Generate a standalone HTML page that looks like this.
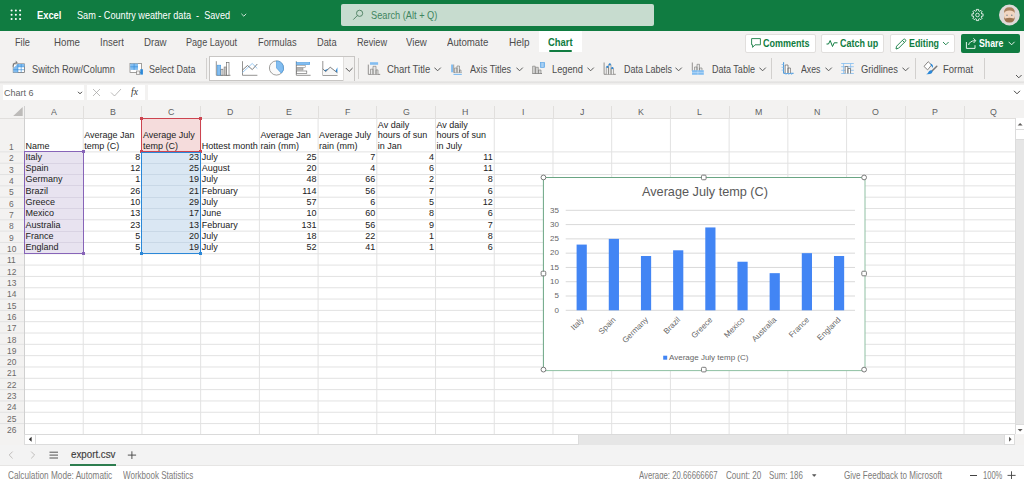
<!DOCTYPE html><html><head><meta charset="utf-8"><style>
*{box-sizing:border-box;margin:0;padding:0}
html,body{width:1024px;height:479px;overflow:hidden;background:#fff}
body{position:relative;font-family:"Liberation Sans",sans-serif;color:#201f1e}
.a{position:absolute;white-space:nowrap}
.hdr{left:0;top:0;width:1024px;height:31px;background:#107c41}
.rib{left:0;top:31px;width:1024px;height:53px;background:linear-gradient(#f3f2f1 0,#f3f2f1 50px,#dedddc 51px,#e9e8e7 52px,#f3f2f1 53px)}
.fbar{left:0;top:84px;width:1024px;height:34px;background:#f3f2f1}
.tab{font-size:9.6px;color:#323130;top:37px}
.tb{font-size:9.6px;color:#323130;top:63.5px}
.btn{height:19px;top:33.5px;background:#fff;border:1px solid #e1dfdd;border-radius:2px;color:#107c41;font-weight:bold;font-size:9.4px;line-height:17px}
.ch{font-size:9.8px;color:#605e5c;top:105.6px;text-align:center}
.rn{font-size:9.8px;color:#605e5c;text-align:center}
.cell{font-size:9px;color:#222;line-height:10.5px}
.num{text-align:right}
</style></head><body><div class="a hdr"></div>
<svg class="a" style="left:0;top:0" width="30" height="30" viewBox="0 0 30 30"><circle cx="11.60" cy="10.50" r="1.05" fill="#fff"/><circle cx="15.85" cy="10.50" r="1.05" fill="#fff"/><circle cx="20.10" cy="10.50" r="1.05" fill="#fff"/><circle cx="11.60" cy="14.75" r="1.05" fill="#fff"/><circle cx="15.85" cy="14.75" r="1.05" fill="#fff"/><circle cx="20.10" cy="14.75" r="1.05" fill="#fff"/><circle cx="11.60" cy="19.00" r="1.05" fill="#fff"/><circle cx="15.85" cy="19.00" r="1.05" fill="#fff"/><circle cx="20.10" cy="19.00" r="1.05" fill="#fff"/></svg>
<div class="a" style="left:37.43px;top:9.20px;font-size:10.75px;line-height:normal;color:#fff;font-weight:bold;transform:scaleX(0.866);transform-origin:0 0;">Excel</div>
<div class="a" style="left:76.54px;top:9.16px;font-size:10.75px;line-height:normal;color:#fff;transform:scaleX(0.848);transform-origin:0 0;">Sam - Country weather data&nbsp; -&nbsp; Saved</div>
<svg class="a" style="left:240px;top:12px" width="8" height="6" viewBox="0 0 8 6"><path d="M1.4 1.8 L3.8 4.2 L6.2 1.8" fill="none" stroke="#fff" stroke-width="0.8"/></svg>
<div class="a" style="left:341px;top:4.2px;width:313px;height:21.4px;background:#c7dccf;border-radius:2px"></div>
<svg class="a" style="left:352px;top:9px" width="12" height="12" viewBox="0 0 12 12"><circle cx="7.6" cy="4.3" r="3.1" fill="none" stroke="#4b7d5f" stroke-width="0.9"/><path d="M5.4 6.5 L1.3 10.6" stroke="#4b7d5f" stroke-width="0.9"/></svg>
<div class="a" style="left:370.94px;top:8.80px;font-size:10.75px;line-height:normal;color:#3f8560;transform:scaleX(0.857);transform-origin:0 0;">Search (Alt + Q)</div>
<svg class="a" style="left:970px;top:8px" width="15" height="14" viewBox="0 0 15 14"><path d="M6.31 1.42 L8.69 1.42 L8.50 2.82 L9.75 3.33 L10.60 2.22 L12.28 3.90 L11.17 4.75 L11.68 6.00 L13.08 5.81 L13.08 8.19 L11.68 8.00 L11.17 9.25 L12.28 10.10 L10.60 11.78 L9.75 10.67 L8.50 11.18 L8.69 12.58 L6.31 12.58 L6.50 11.18 L5.25 10.67 L4.40 11.78 L2.72 10.10 L3.83 9.25 L3.32 8.00 L1.92 8.19 L1.92 5.81 L3.32 6.00 L3.83 4.75 L2.72 3.90 L4.40 2.22 L5.25 3.33 L6.50 2.82 Z" fill="none" stroke="#fff" stroke-width="0.8" stroke-linejoin="round"/><circle cx="7.5" cy="7" r="1.8" fill="none" stroke="#fff" stroke-width="0.8"/></svg>
<svg class="a" style="left:998px;top:4px" width="23" height="23" viewBox="0 0 23 23"><circle cx="11.4" cy="11" r="10.4" fill="#dedad9"/><path d="M6 9 Q6 3.4 11.4 3.4 Q16.6 3.4 16.6 9 L16.6 13 Q16.6 18.2 11.4 18.2 Q6 18.2 6 13 Z" fill="#f1d6c2"/><path d="M6 9.2 Q5.8 3.3 11.4 3.3 Q17 3.3 16.8 9.2 Q15.5 6.4 11.4 6.5 Q7.3 6.4 6 9.2 Z" fill="#a7805e"/><path d="M6 12 Q6.4 15.2 8 14.3 Q11.4 13 14.8 14.3 Q16.4 15.2 16.8 12 Q17 18.8 11.4 18.6 Q5.8 18.8 6 12 Z" fill="#9c7552"/><circle cx="9" cy="11.2" r="0.7" fill="#6a7f8a"/><circle cx="13.8" cy="11.2" r="0.7" fill="#6a7f8a"/></svg>
<div class="a rib"></div>
<div class="a" style="left:14.54px;top:35.70px;font-size:10.75px;line-height:normal;color:#4d4d4d;transform:scaleX(0.856);transform-origin:0 0;">File</div>
<div class="a" style="left:53.62px;top:35.70px;font-size:10.75px;line-height:normal;color:#4d4d4d;transform:scaleX(0.902);transform-origin:0 0;">Home</div>
<div class="a" style="left:99.82px;top:35.70px;font-size:10.75px;line-height:normal;color:#4d4d4d;transform:scaleX(0.887);transform-origin:0 0;">Insert</div>
<div class="a" style="left:143.92px;top:35.70px;font-size:10.75px;line-height:normal;color:#4d4d4d;transform:scaleX(0.900);transform-origin:0 0;">Draw</div>
<div class="a" style="left:186.45px;top:35.70px;font-size:10.75px;line-height:normal;color:#4d4d4d;transform:scaleX(0.845);transform-origin:0 0;">Page Layout</div>
<div class="a" style="left:258.14px;top:35.70px;font-size:10.75px;line-height:normal;color:#4d4d4d;transform:scaleX(0.860);transform-origin:0 0;">Formulas</div>
<div class="a" style="left:317.24px;top:35.70px;font-size:10.75px;line-height:normal;color:#4d4d4d;transform:scaleX(0.860);transform-origin:0 0;">Data</div>
<div class="a" style="left:356.84px;top:35.70px;font-size:10.75px;line-height:normal;color:#4d4d4d;transform:scaleX(0.852);transform-origin:0 0;">Review</div>
<div class="a" style="left:406.42px;top:35.70px;font-size:10.75px;line-height:normal;color:#4d4d4d;transform:scaleX(0.899);transform-origin:0 0;">View</div>
<div class="a" style="left:447.42px;top:35.70px;font-size:10.75px;line-height:normal;color:#4d4d4d;transform:scaleX(0.897);transform-origin:0 0;">Automate</div>
<div class="a" style="left:508.90px;top:35.70px;font-size:10.75px;line-height:normal;color:#4d4d4d;transform:scaleX(0.927);transform-origin:0 0;">Help</div>
<div class="a" style="left:538.5px;top:31px;width:43.4px;height:20.5px;background:#fff"></div>
<div class="a" style="left:548.23px;top:35.70px;font-size:10.75px;line-height:normal;color:#107c41;font-weight:bold;transform:scaleX(0.874);transform-origin:0 0;">Chart</div>
<div class="a" style="left:548.7px;top:49.6px;width:23.6px;height:2.2px;background:#107c41;border-radius:1px"></div>
<div class="a btn" style="left:745px;width:70.5px"></div>
<svg class="a" style="left:746px;top:34px" width="20" height="18" viewBox="746 34 20 18"><path d="M751.6 38.6 H760.4 V44.8 H755 L752.6 47.4 V44.8 H751.6 Z" fill="none" stroke="#2e8b57" stroke-width="1" stroke-linejoin="round"/></svg>
<div class="a" style="left:763.15px;top:38.21px;font-size:10.2px;line-height:normal;color:#107c41;font-weight:bold;transform:scaleX(0.884);transform-origin:0 0;">Comments</div>
<div class="a btn" style="left:821px;width:62.6px"></div>
<svg class="a" style="left:826px;top:39px" width="12" height="9" viewBox="0 0 12 9"><path d="M0.5 5 L2.5 5 L4.2 1.5 L6.5 7.5 L8.2 3.8 L11.5 3.8" fill="none" stroke="#107c41" stroke-width="1"/></svg>
<div class="a" style="left:839.95px;top:38.21px;font-size:10.2px;line-height:normal;color:#107c41;font-weight:bold;transform:scaleX(0.878);transform-origin:0 0;">Catch up</div>
<div class="a btn" style="left:889.7px;width:65.3px"></div>
<svg class="a" style="left:895px;top:38px" width="12" height="12" viewBox="0 0 12 12"><path d="M1 11 L1.6 8.2 L8.4 1.4 Q9.4 0.6 10.4 1.6 Q11.2 2.6 10.4 3.4 L3.6 10.2 Z M7.4 2.4 L9.4 4.4" fill="none" stroke="#107c41" stroke-width="0.9"/></svg>
<div class="a" style="left:908.76px;top:38.21px;font-size:10.2px;line-height:normal;color:#107c41;font-weight:bold;transform:scaleX(0.868);transform-origin:0 0;">Editing</div>
<svg class="a" style="left:941.5px;top:40.5px" width="8" height="5" viewBox="0 0 8 5"><path d="M1 1 L3.8 3.8 L6.6 1" fill="none" stroke="#107c41" stroke-width="0.9"/></svg>
<div class="a" style="left:960.5px;top:33.5px;width:59.5px;height:19px;background:#107c41;border-radius:2px"></div>
<svg class="a" style="left:962px;top:34px" width="20" height="18" viewBox="962 34 20 18"><path d="M966.4 42 V48.4 H975 V45.2" fill="none" stroke="#fff" stroke-width="0.9"/><path d="M968.6 45 Q969.4 41 975.2 40.6 M973.4 38.4 L975.8 40.6 L973.6 43" fill="none" stroke="#fff" stroke-width="0.9" stroke-linejoin="round"/></svg>
<div class="a" style="left:979.46px;top:38.21px;font-size:10.2px;line-height:normal;color:#fff;font-weight:bold;transform:scaleX(0.860);transform-origin:0 0;">Share</div>
<svg class="a" style="left:1007.5px;top:40.5px" width="8" height="5" viewBox="0 0 8 5"><path d="M0.6 0.8 L3.6 3.8 L6.6 0.8" fill="none" stroke="#fff" stroke-width="0.9"/></svg>
<div class="a" style="left:31.74px;top:62.80px;font-size:10.75px;line-height:normal;color:#4d4d4d;transform:scaleX(0.863);transform-origin:0 0;">Switch Row/Column</div>
<div class="a" style="left:149.05px;top:62.80px;font-size:10.75px;line-height:normal;color:#4d4d4d;transform:scaleX(0.835);transform-origin:0 0;">Select Data</div>
<div class="a" style="left:206.2px;top:58px;width:1px;height:21px;background:#d2d0ce"></div>
<div class="a" style="left:209.3px;top:56.3px;width:145.5px;height:24.8px;border:1px solid #c8c6c4;background:#fff"></div>
<div class="a" style="left:343px;top:57px;width:1px;height:23.5px;background:#e1dfdd"></div>
<div class="a" style="left:343.5px;top:57px;width:10.5px;height:23.5px;background:#f3f2f1"></div>
<svg class="a" style="left:345px;top:66.5px" width="9" height="6" viewBox="0 0 9 6"><path d="M0.8 1 L4.2 4.4 L7.6 1" fill="none" stroke="#424242" stroke-width="0.9"/></svg>
<div class="a" style="left:387.43px;top:62.80px;font-size:10.75px;line-height:normal;color:#4d4d4d;transform:scaleX(0.881);transform-origin:0 0;">Chart Title</div>
<svg class="a" style="left:434.4px;top:66.5px" width="8" height="5" viewBox="0 0 8 5"><path d="M0.4 0.6 L3.6 3.8 L6.8 0.6" fill="none" stroke="#505050" stroke-width="0.95"/></svg>
<div class="a" style="left:470.34px;top:62.80px;font-size:10.75px;line-height:normal;color:#4d4d4d;transform:scaleX(0.850);transform-origin:0 0;">Axis Titles</div>
<svg class="a" style="left:515.7px;top:66.5px" width="8" height="5" viewBox="0 0 8 5"><path d="M0.4 0.6 L3.6 3.8 L6.8 0.6" fill="none" stroke="#505050" stroke-width="0.95"/></svg>
<div class="a" style="left:551.54px;top:62.80px;font-size:10.75px;line-height:normal;color:#4d4d4d;transform:scaleX(0.862);transform-origin:0 0;">Legend</div>
<svg class="a" style="left:586.6px;top:66.5px" width="8" height="5" viewBox="0 0 8 5"><path d="M0.4 0.6 L3.6 3.8 L6.8 0.6" fill="none" stroke="#505050" stroke-width="0.95"/></svg>
<div class="a" style="left:623.55px;top:62.80px;font-size:10.75px;line-height:normal;color:#4d4d4d;transform:scaleX(0.835);transform-origin:0 0;">Data Labels</div>
<svg class="a" style="left:675.0px;top:66.5px" width="8" height="5" viewBox="0 0 8 5"><path d="M0.4 0.6 L3.6 3.8 L6.8 0.6" fill="none" stroke="#505050" stroke-width="0.95"/></svg>
<div class="a" style="left:711.55px;top:62.80px;font-size:10.75px;line-height:normal;color:#4d4d4d;transform:scaleX(0.838);transform-origin:0 0;">Data Table</div>
<svg class="a" style="left:759.0px;top:66.5px" width="8" height="5" viewBox="0 0 8 5"><path d="M0.4 0.6 L3.6 3.8 L6.8 0.6" fill="none" stroke="#505050" stroke-width="0.95"/></svg>
<div class="a" style="left:801.06px;top:62.80px;font-size:10.75px;line-height:normal;color:#4d4d4d;transform:scaleX(0.811);transform-origin:0 0;">Axes</div>
<svg class="a" style="left:824.5px;top:66.5px" width="8" height="5" viewBox="0 0 8 5"><path d="M0.4 0.6 L3.6 3.8 L6.8 0.6" fill="none" stroke="#505050" stroke-width="0.95"/></svg>
<div class="a" style="left:860.73px;top:62.80px;font-size:10.75px;line-height:normal;color:#4d4d4d;transform:scaleX(0.868);transform-origin:0 0;">Gridlines</div>
<svg class="a" style="left:902.0px;top:66.5px" width="8" height="5" viewBox="0 0 8 5"><path d="M0.4 0.6 L3.6 3.8 L6.8 0.6" fill="none" stroke="#505050" stroke-width="0.95"/></svg>
<div class="a" style="left:943.43px;top:62.80px;font-size:10.75px;line-height:normal;color:#4d4d4d;transform:scaleX(0.883);transform-origin:0 0;">Format</div>
<div class="a" style="left:358.2px;top:58px;width:1px;height:21px;background:#d2d0ce"></div>
<div class="a" style="left:771.3px;top:58px;width:1px;height:21px;background:#d2d0ce"></div>
<div class="a" style="left:914.6px;top:58px;width:1px;height:21px;background:#d2d0ce"></div>
<div class="a" style="left:984.3px;top:58px;width:1px;height:21px;background:#d2d0ce"></div>
<svg class="a" style="left:1014.5px;top:74px" width="8" height="5" viewBox="0 0 8 5"><path d="M1 1 L3.8 3.8 L6.6 1" fill="none" stroke="#424242" stroke-width="0.9"/></svg>
<svg class="a" style="left:0;top:0" width="1024" height="82" viewBox="0 0 1024 82"><rect x="13.2" y="63.9" width="11.4" height="8.6" fill="#fff" stroke="#616161" stroke-width="0.7"/><path d="M17.8 64 H24.5 V66.8 H17.9 V72.4 H13.3 V68 Z" fill="#83bdf0"/><path d="M17.8 66.8 H24.5 M13.3 69.7 H24.5 M17.9 64 V72.4 M21.2 64 V72.4" stroke="#2b88d8" stroke-width="0.6" fill="none"/><path d="M12.8 66.5 Q13.2 62.6 17 62.2 M15.6 61.2 L17.2 62.2 L16 63.6" fill="none" stroke="#616161" stroke-width="0.7"/><rect x="130" y="63.4" width="11.6" height="9.2" fill="#fff" stroke="#7a7876" stroke-width="0.7"/><rect x="130.2" y="63.6" width="7.8" height="6.3" fill="#83bdf0"/><path d="M130.2 66.8 H138 M134.1 63.6 V69.9" stroke="#2b88d8" stroke-width="0.6"/><rect x="136.6" y="71" width="3.2" height="3.6" fill="#f3f2f1" stroke="#7a7876" stroke-width="0.6"/><rect x="140.3" y="69.2" width="2.6" height="5.4" fill="#2b88d8"/><path d="M216.3 61.2 V75.3 H230.5" fill="none" stroke="#7a7876" stroke-width="0.8"/><rect x="217.1" y="65.1" width="3.7" height="10" fill="#83bdf0" stroke="#2b88d8" stroke-width="0.4"/><rect x="221" y="69.2" width="1.9" height="6" fill="#fff" stroke="#616161" stroke-width="0.6"/><rect x="224.1" y="67" width="2.3" height="8.2" fill="#c8c6c4" stroke="#7a7876" stroke-width="0.6"/><rect x="226.6" y="62.3" width="2.4" height="12.9" fill="#fff" stroke="#616161" stroke-width="0.6"/><path d="M242.5 61.2 V75.3 H257.4" fill="none" stroke="#7a7876" stroke-width="0.8"/><path d="M242.5 72.5 L252.2 63.5 L257.3 68.5" fill="none" stroke="#83bdf0" stroke-width="0.8"/><path d="M242.5 70 L247.5 65.5 L252.3 69.6 L257.3 64" fill="none" stroke="#616161" stroke-width="0.8"/><circle cx="276.5" cy="68" r="7.1" fill="#fafafa" stroke="#7a7876" stroke-width="0.7"/><path d="M276.5 68 V60.9 A7.1 7.1 0 0 1 281.3 73.2 Z" fill="#83bdf0" stroke="#2b88d8" stroke-width="0.5"/><path d="M296.3 61.2 V75.3 H310.6" fill="none" stroke="#7a7876" stroke-width="0.8"/><rect x="296.6" y="62.4" width="13.2" height="2.3" fill="#83bdf0" stroke="#2b88d8" stroke-width="0.4"/><rect x="296.6" y="65.4" width="8.6" height="1.9" fill="#fff" stroke="#7a7876" stroke-width="0.5"/><rect x="296.6" y="68" width="6.4" height="2" fill="#c8c6c4" stroke="#7a7876" stroke-width="0.5"/><rect x="296.6" y="71" width="10.2" height="2.3" fill="#fff" stroke="#616161" stroke-width="0.6"/><path d="M322.8 61 V75.4 H337.5" fill="none" stroke="#7a7876" stroke-width="0.8"/><path d="M322.8 69 L325.8 71.5 L330.2 67.2 L337.4 72.8 V75 H322.8 Z" fill="#f7f7f7"/><path d="M323.8 70.6 L325.8 71.6 L328.6 68.6 Z M335.4 71.3 L337.4 67.2 V72.8 Z" fill="#2b88d8"/><path d="M322.8 69 L325.8 71.5 L330.2 67.2 L337.4 72.8" fill="none" stroke="#616161" stroke-width="0.8"/><rect x="370" y="62.2" width="8.1" height="2.6" fill="#83bdf0"/><path d="M368.3 64.6 V74.4 H380.2" fill="none" stroke="#7a7876" stroke-width="0.8"/><path d="M370.5 74.3 V69.2 H373 V74.3 M373 74.3 V66.3 H376 V74.3 M376 74.3 V69.9 H378 V74.3" fill="#e6e6e6" stroke="#7a7876" stroke-width="0.6"/><rect x="451.1" y="64.5" width="1.9" height="7.8" fill="#83bdf0"/><rect x="453.5" y="73.8" width="8.3" height="1.2" fill="#83bdf0"/><path d="M453.7 64.5 V72.5 H461.5" fill="none" stroke="#7a7876" stroke-width="0.7"/><path d="M454.6 72.5 V68 H457 V72.5 M457 72.5 V66 H459.5 V72.5 M459.5 72.5 V70 H461 V72.5" fill="#e6e6e6" stroke="#7a7876" stroke-width="0.6"/><path d="M532.3 73.5 H541.9" stroke="#616161" stroke-width="0.8"/><path d="M532.6 73.3 V66.2 H535.2 V73.3 M535.6 73.3 V67.3 H538.3 V73.3 M538.5 73.3 V70 H541 V73.3" fill="#d6d6d6" stroke="#7a7876" stroke-width="0.6"/><rect x="540.2" y="62.3" width="4.6" height="5.4" fill="#83bdf0" stroke="#2b88d8" stroke-width="0.3"/><path d="M541.3 64 H543.6 M541.3 66 H543.6" stroke="#fff" stroke-width="0.6"/><path d="M604.1 62.5 V74.3 H615.8" fill="none" stroke="#7a7876" stroke-width="0.8"/><path d="M606.3 74.3 V67 H608.5 V74.3 M608.6 74.3 V64.6 H611 V74.3 M611.1 74.3 V68.3 H613.5 V74.3" fill="#eee" stroke="#7a7876" stroke-width="0.6"/><circle cx="607.4" cy="66.8" r="1.1" fill="#2b88d8"/><circle cx="609.8" cy="64.4" r="1.1" fill="#2b88d8"/><circle cx="612.3" cy="68.1" r="1.1" fill="#2b88d8"/><path d="M692.3 62.5 V71" fill="none" stroke="#7a7876" stroke-width="0.8"/><path d="M694.5 71 V67 H697 V71 M697 71 V64.3 H699.5 V71 M699.5 71 V68 H702 V71" fill="#e6e6e6" stroke="#7a7876" stroke-width="0.6"/><rect x="692" y="70.2" width="11.8" height="4.6" fill="#83bdf0"/><path d="M697.9 70.2 V74.8 M692 72.5 H703.8" stroke="#fff" stroke-width="0.3"/><path d="M783.6 62.2 V73.3 H793.6" fill="none" stroke="#2b88d8" stroke-width="0.9"/><path d="M781.6 64.5 H783.6 M781.6 67.3 H783.6 M781.6 70.1 H783.6 M786 73.3 V75 M788.8 73.3 V75 M791.6 73.3 V75" stroke="#83bdf0" stroke-width="0.8"/><path d="M785.2 73 V65 H788 V73 M788 73 V68 H790.4 V73" fill="#fff" stroke="#616161" stroke-width="0.7"/><path d="M841.2 63.5 H853.8 M841.2 66.7 H853.8 M841.2 70.3 H853.8 M841.2 73.5 H853.8 M843.6 63.5 V73.5 M850.6 63.5 V73.5" stroke="#83bdf0" stroke-width="0.8"/><path d="M845.2 73.5 V66.5 H847.8 V73.5 M848 73.5 V68.5 H850.5 V73.5" fill="#fff" stroke="#616161" stroke-width="0.7"/><path d="M924 66.4 L928.2 61.7 L931.6 65 L927.6 69.9 Z" fill="#fff" stroke="#7a7876" stroke-width="0.9" stroke-linejoin="round"/><path d="M930.4 63.6 Q933.6 64.2 932.9 68 Q931.8 66.2 930.9 65.4 Z" fill="#2b88d8"/><path d="M936.8 66.2 L932 71" stroke="#7a7876" stroke-width="1.5" stroke-linecap="round"/><path d="M932.3 70.6 Q933.6 74.6 926.2 74.2 Q928.2 73.4 928.6 71.8 Q929.8 69.6 932.3 70.6 Z" fill="#2b88d8"/></svg>
<div class="a fbar"></div>
<div class="a" style="left:3px;top:84.8px;width:81px;height:15.2px;background:#fff"></div>
<div class="a" style="left:4.45px;top:87.24px;font-size:9.4px;line-height:normal;color:#5f5f5f;transform:scaleX(0.964);transform-origin:0 0;">Chart 6</div>
<svg class="a" style="left:77px;top:91px" width="6" height="4" viewBox="0 0 6 4"><path d="M1 0.8 L3 2.8 L5 0.8" fill="none" stroke="#323130" stroke-width="0.9"/></svg>
<div class="a" style="left:87px;top:84.8px;width:58px;height:15.2px;background:#fff"></div>
<svg class="a" style="left:92px;top:88px" width="9" height="9" viewBox="0 0 9 9"><path d="M1 1 L8 8 M8 1 L1 8" stroke="#a19f9d" stroke-width="0.7"/></svg>
<svg class="a" style="left:110px;top:88px" width="12" height="9" viewBox="0 0 12 9"><path d="M1 4.5 L4.5 8 L11 1" fill="none" stroke="#a19f9d" stroke-width="0.7"/></svg>
<div class="a" style="left:131px;top:86.5px;font-size:9.5px;font-style:italic;font-family:'Liberation Serif',serif;color:#323130">fx</div>
<div class="a" style="left:148px;top:84.8px;width:876px;height:15.2px;background:#fff"></div>
<svg class="a" style="left:1013px;top:90px" width="8" height="5" viewBox="0 0 8 5"><path d="M1 0.8 L4 3.8 L7 0.8" fill="none" stroke="#323130" stroke-width="0.9"/></svg>
<div class="a" style="left:0;top:118.2px;width:1024px;height:316.2px;background:#fff"></div>
<div class="a" style="left:0;top:102px;width:24.5px;height:332.4px;background:#f3f2f1"></div>
<svg class="a" style="left:12px;top:106px" width="12" height="12" viewBox="0 0 12 12"><path d="M10.7 1 L10.7 10 L1.2 10 Z" fill="#bdbbb9"/></svg>
<div class="a" style="left:50.88px;top:105.67px;font-size:9.8px;line-height:normal;color:#616161;transform:scaleX(0.9);transform-origin:0 0;">A</div>
<div class="a" style="left:24.0px;top:106px;width:1px;height:12.2px;background:#e1dfdd"></div>
<div class="a" style="left:109.60px;top:105.67px;font-size:9.8px;line-height:normal;color:#616161;transform:scaleX(0.9);transform-origin:0 0;">B</div>
<div class="a" style="left:82.7px;top:106px;width:1px;height:12.2px;background:#e1dfdd"></div>
<div class="a" style="left:168.08px;top:105.67px;font-size:9.8px;line-height:normal;color:#616161;transform:scaleX(0.9);transform-origin:0 0;">C</div>
<div class="a" style="left:141.4px;top:106px;width:1px;height:12.2px;background:#e1dfdd"></div>
<div class="a" style="left:226.80px;top:105.67px;font-size:9.8px;line-height:normal;color:#616161;transform:scaleX(0.9);transform-origin:0 0;">D</div>
<div class="a" style="left:200.2px;top:106px;width:1px;height:12.2px;background:#e1dfdd"></div>
<div class="a" style="left:285.76px;top:105.67px;font-size:9.8px;line-height:normal;color:#616161;transform:scaleX(0.9);transform-origin:0 0;">E</div>
<div class="a" style="left:258.9px;top:106px;width:1px;height:12.2px;background:#e1dfdd"></div>
<div class="a" style="left:344.73px;top:105.67px;font-size:9.8px;line-height:normal;color:#616161;transform:scaleX(0.9);transform-origin:0 0;">F</div>
<div class="a" style="left:317.6px;top:106px;width:1px;height:12.2px;background:#e1dfdd"></div>
<div class="a" style="left:402.71px;top:105.67px;font-size:9.8px;line-height:normal;color:#616161;transform:scaleX(0.9);transform-origin:0 0;">G</div>
<div class="a" style="left:376.3px;top:106px;width:1px;height:12.2px;background:#e1dfdd"></div>
<div class="a" style="left:461.68px;top:105.67px;font-size:9.8px;line-height:normal;color:#616161;transform:scaleX(0.9);transform-origin:0 0;">H</div>
<div class="a" style="left:435.0px;top:106px;width:1px;height:12.2px;background:#e1dfdd"></div>
<div class="a" style="left:522.35px;top:105.67px;font-size:9.8px;line-height:normal;color:#616161;transform:scaleX(0.9);transform-origin:0 0;">I</div>
<div class="a" style="left:493.8px;top:106px;width:1px;height:12.2px;background:#e1dfdd"></div>
<div class="a" style="left:580.10px;top:105.67px;font-size:9.8px;line-height:normal;color:#616161;transform:scaleX(0.9);transform-origin:0 0;">J</div>
<div class="a" style="left:552.5px;top:106px;width:1px;height:12.2px;background:#e1dfdd"></div>
<div class="a" style="left:638.08px;top:105.67px;font-size:9.8px;line-height:normal;color:#616161;transform:scaleX(0.9);transform-origin:0 0;">K</div>
<div class="a" style="left:611.2px;top:106px;width:1px;height:12.2px;background:#e1dfdd"></div>
<div class="a" style="left:697.29px;top:105.67px;font-size:9.8px;line-height:normal;color:#616161;transform:scaleX(0.9);transform-origin:0 0;">L</div>
<div class="a" style="left:669.9px;top:106px;width:1px;height:12.2px;background:#e1dfdd"></div>
<div class="a" style="left:754.79px;top:105.67px;font-size:9.8px;line-height:normal;color:#616161;transform:scaleX(0.9);transform-origin:0 0;">M</div>
<div class="a" style="left:728.6px;top:106px;width:1px;height:12.2px;background:#e1dfdd"></div>
<div class="a" style="left:814.00px;top:105.67px;font-size:9.8px;line-height:normal;color:#616161;transform:scaleX(0.9);transform-origin:0 0;">N</div>
<div class="a" style="left:787.4px;top:106px;width:1px;height:12.2px;background:#e1dfdd"></div>
<div class="a" style="left:872.47px;top:105.67px;font-size:9.8px;line-height:normal;color:#616161;transform:scaleX(0.9);transform-origin:0 0;">O</div>
<div class="a" style="left:846.1px;top:106px;width:1px;height:12.2px;background:#e1dfdd"></div>
<div class="a" style="left:931.68px;top:105.67px;font-size:9.8px;line-height:normal;color:#616161;transform:scaleX(0.9);transform-origin:0 0;">P</div>
<div class="a" style="left:904.8px;top:106px;width:1px;height:12.2px;background:#e1dfdd"></div>
<div class="a" style="left:989.91px;top:105.67px;font-size:9.8px;line-height:normal;color:#616161;transform:scaleX(0.9);transform-origin:0 0;">Q</div>
<div class="a" style="left:963.5px;top:106px;width:1px;height:12.2px;background:#e1dfdd"></div>
<div class="a" style="left:0;top:117.7px;width:1024px;height:1px;background:#e1dfdd"></div>
<svg class="a" style="left:0;top:0" width="1024" height="479" viewBox="0 0 1024 479"><line x1="83.22" y1="118.2" x2="83.22" y2="434.3" stroke="#e2e2e2" stroke-width="1"/><line x1="141.94" y1="118.2" x2="141.94" y2="434.3" stroke="#e2e2e2" stroke-width="1"/><line x1="200.66" y1="118.2" x2="200.66" y2="434.3" stroke="#e2e2e2" stroke-width="1"/><line x1="259.38" y1="118.2" x2="259.38" y2="434.3" stroke="#e2e2e2" stroke-width="1"/><line x1="318.10" y1="118.2" x2="318.10" y2="434.3" stroke="#e2e2e2" stroke-width="1"/><line x1="376.82" y1="118.2" x2="376.82" y2="434.3" stroke="#e2e2e2" stroke-width="1"/><line x1="435.54" y1="118.2" x2="435.54" y2="434.3" stroke="#e2e2e2" stroke-width="1"/><line x1="494.26" y1="118.2" x2="494.26" y2="434.3" stroke="#e2e2e2" stroke-width="1"/><line x1="552.98" y1="118.2" x2="552.98" y2="434.3" stroke="#e2e2e2" stroke-width="1"/><line x1="611.70" y1="118.2" x2="611.70" y2="434.3" stroke="#e2e2e2" stroke-width="1"/><line x1="670.42" y1="118.2" x2="670.42" y2="434.3" stroke="#e2e2e2" stroke-width="1"/><line x1="729.14" y1="118.2" x2="729.14" y2="434.3" stroke="#e2e2e2" stroke-width="1"/><line x1="787.86" y1="118.2" x2="787.86" y2="434.3" stroke="#e2e2e2" stroke-width="1"/><line x1="846.58" y1="118.2" x2="846.58" y2="434.3" stroke="#e2e2e2" stroke-width="1"/><line x1="905.30" y1="118.2" x2="905.30" y2="434.3" stroke="#e2e2e2" stroke-width="1"/><line x1="964.02" y1="118.2" x2="964.02" y2="434.3" stroke="#e2e2e2" stroke-width="1"/><line x1="1022.74" y1="118.2" x2="1022.74" y2="434.3" stroke="#e2e2e2" stroke-width="1"/><line x1="0" y1="151.90" x2="1015" y2="151.90" stroke="#e2e2e2" stroke-width="1"/><line x1="0" y1="163.22" x2="1015" y2="163.22" stroke="#e2e2e2" stroke-width="1"/><line x1="0" y1="174.54" x2="1015" y2="174.54" stroke="#e2e2e2" stroke-width="1"/><line x1="0" y1="185.86" x2="1015" y2="185.86" stroke="#e2e2e2" stroke-width="1"/><line x1="0" y1="197.18" x2="1015" y2="197.18" stroke="#e2e2e2" stroke-width="1"/><line x1="0" y1="208.50" x2="1015" y2="208.50" stroke="#e2e2e2" stroke-width="1"/><line x1="0" y1="219.82" x2="1015" y2="219.82" stroke="#e2e2e2" stroke-width="1"/><line x1="0" y1="231.14" x2="1015" y2="231.14" stroke="#e2e2e2" stroke-width="1"/><line x1="0" y1="242.46" x2="1015" y2="242.46" stroke="#e2e2e2" stroke-width="1"/><line x1="0" y1="253.78" x2="1015" y2="253.78" stroke="#e2e2e2" stroke-width="1"/><line x1="0" y1="265.10" x2="1015" y2="265.10" stroke="#e2e2e2" stroke-width="1"/><line x1="0" y1="276.42" x2="1015" y2="276.42" stroke="#e2e2e2" stroke-width="1"/><line x1="0" y1="287.74" x2="1015" y2="287.74" stroke="#e2e2e2" stroke-width="1"/><line x1="0" y1="299.06" x2="1015" y2="299.06" stroke="#e2e2e2" stroke-width="1"/><line x1="0" y1="310.38" x2="1015" y2="310.38" stroke="#e2e2e2" stroke-width="1"/><line x1="0" y1="321.70" x2="1015" y2="321.70" stroke="#e2e2e2" stroke-width="1"/><line x1="0" y1="333.02" x2="1015" y2="333.02" stroke="#e2e2e2" stroke-width="1"/><line x1="0" y1="344.34" x2="1015" y2="344.34" stroke="#e2e2e2" stroke-width="1"/><line x1="0" y1="355.66" x2="1015" y2="355.66" stroke="#e2e2e2" stroke-width="1"/><line x1="0" y1="366.98" x2="1015" y2="366.98" stroke="#e2e2e2" stroke-width="1"/><line x1="0" y1="378.30" x2="1015" y2="378.30" stroke="#e2e2e2" stroke-width="1"/><line x1="0" y1="389.62" x2="1015" y2="389.62" stroke="#e2e2e2" stroke-width="1"/><line x1="0" y1="400.94" x2="1015" y2="400.94" stroke="#e2e2e2" stroke-width="1"/><line x1="0" y1="412.26" x2="1015" y2="412.26" stroke="#e2e2e2" stroke-width="1"/><line x1="0" y1="423.58" x2="1015" y2="423.58" stroke="#e2e2e2" stroke-width="1"/><line x1="0" y1="434.90" x2="1015" y2="434.90" stroke="#e2e2e2" stroke-width="1"/><line x1="24.50" y1="106" x2="24.50" y2="434.3" stroke="#d0d0d0" stroke-width="1"/></svg>
<div class="a" style="left:9.27px;top:141.06px;font-size:9.6px;line-height:normal;color:#6b6968;transform:scaleX(0.88);transform-origin:0 0;">1</div>
<div class="a" style="left:9.27px;top:152.38px;font-size:9.6px;line-height:normal;color:#6b6968;transform:scaleX(0.88);transform-origin:0 0;">2</div>
<div class="a" style="left:9.27px;top:163.70px;font-size:9.6px;line-height:normal;color:#6b6968;transform:scaleX(0.88);transform-origin:0 0;">3</div>
<div class="a" style="left:9.27px;top:175.02px;font-size:9.6px;line-height:normal;color:#6b6968;transform:scaleX(0.88);transform-origin:0 0;">4</div>
<div class="a" style="left:9.27px;top:186.34px;font-size:9.6px;line-height:normal;color:#6b6968;transform:scaleX(0.88);transform-origin:0 0;">5</div>
<div class="a" style="left:9.27px;top:197.66px;font-size:9.6px;line-height:normal;color:#6b6968;transform:scaleX(0.88);transform-origin:0 0;">6</div>
<div class="a" style="left:9.27px;top:208.98px;font-size:9.6px;line-height:normal;color:#6b6968;transform:scaleX(0.88);transform-origin:0 0;">7</div>
<div class="a" style="left:9.27px;top:220.30px;font-size:9.6px;line-height:normal;color:#6b6968;transform:scaleX(0.88);transform-origin:0 0;">8</div>
<div class="a" style="left:9.27px;top:231.62px;font-size:9.6px;line-height:normal;color:#6b6968;transform:scaleX(0.88);transform-origin:0 0;">9</div>
<div class="a" style="left:6.92px;top:242.94px;font-size:9.6px;line-height:normal;color:#6b6968;transform:scaleX(0.88);transform-origin:0 0;">10</div>
<div class="a" style="left:7.23px;top:254.26px;font-size:9.6px;line-height:normal;color:#6b6968;transform:scaleX(0.88);transform-origin:0 0;">11</div>
<div class="a" style="left:6.92px;top:265.58px;font-size:9.6px;line-height:normal;color:#6b6968;transform:scaleX(0.88);transform-origin:0 0;">12</div>
<div class="a" style="left:6.92px;top:276.90px;font-size:9.6px;line-height:normal;color:#6b6968;transform:scaleX(0.88);transform-origin:0 0;">13</div>
<div class="a" style="left:6.92px;top:288.22px;font-size:9.6px;line-height:normal;color:#6b6968;transform:scaleX(0.88);transform-origin:0 0;">14</div>
<div class="a" style="left:6.92px;top:299.54px;font-size:9.6px;line-height:normal;color:#6b6968;transform:scaleX(0.88);transform-origin:0 0;">15</div>
<div class="a" style="left:6.92px;top:310.86px;font-size:9.6px;line-height:normal;color:#6b6968;transform:scaleX(0.88);transform-origin:0 0;">16</div>
<div class="a" style="left:6.92px;top:322.18px;font-size:9.6px;line-height:normal;color:#6b6968;transform:scaleX(0.88);transform-origin:0 0;">17</div>
<div class="a" style="left:6.92px;top:333.50px;font-size:9.6px;line-height:normal;color:#6b6968;transform:scaleX(0.88);transform-origin:0 0;">18</div>
<div class="a" style="left:6.92px;top:344.82px;font-size:9.6px;line-height:normal;color:#6b6968;transform:scaleX(0.88);transform-origin:0 0;">19</div>
<div class="a" style="left:6.92px;top:356.14px;font-size:9.6px;line-height:normal;color:#6b6968;transform:scaleX(0.88);transform-origin:0 0;">20</div>
<div class="a" style="left:6.92px;top:367.46px;font-size:9.6px;line-height:normal;color:#6b6968;transform:scaleX(0.88);transform-origin:0 0;">21</div>
<div class="a" style="left:6.92px;top:378.78px;font-size:9.6px;line-height:normal;color:#6b6968;transform:scaleX(0.88);transform-origin:0 0;">22</div>
<div class="a" style="left:6.92px;top:390.10px;font-size:9.6px;line-height:normal;color:#6b6968;transform:scaleX(0.88);transform-origin:0 0;">23</div>
<div class="a" style="left:6.92px;top:401.42px;font-size:9.6px;line-height:normal;color:#6b6968;transform:scaleX(0.88);transform-origin:0 0;">24</div>
<div class="a" style="left:6.92px;top:412.74px;font-size:9.6px;line-height:normal;color:#6b6968;transform:scaleX(0.88);transform-origin:0 0;">25</div>
<div class="a" style="left:6.92px;top:424.06px;font-size:9.6px;line-height:normal;color:#6b6968;transform:scaleX(0.88);transform-origin:0 0;">26</div>
<div class="a" style="left:24.5px;top:151.9px;width:58.72px;height:101.9px;background:#e8e3f0"></div>
<div class="a" style="left:141.9px;top:151.9px;width:58.72px;height:101.9px;background:#dae7f3"></div>
<div class="a" style="left:141.9px;top:118.2px;width:58.72px;height:33.7px;background:#f5dcdc"></div>
<div class="a" style="left:24.5px;top:162.7px;width:58.72px;height:1px;background:#d9d3e3"></div>
<div class="a" style="left:141.9px;top:162.7px;width:58.72px;height:1px;background:#c9d8e6"></div>
<div class="a" style="left:24.5px;top:174.0px;width:58.72px;height:1px;background:#d9d3e3"></div>
<div class="a" style="left:141.9px;top:174.0px;width:58.72px;height:1px;background:#c9d8e6"></div>
<div class="a" style="left:24.5px;top:185.4px;width:58.72px;height:1px;background:#d9d3e3"></div>
<div class="a" style="left:141.9px;top:185.4px;width:58.72px;height:1px;background:#c9d8e6"></div>
<div class="a" style="left:24.5px;top:196.7px;width:58.72px;height:1px;background:#d9d3e3"></div>
<div class="a" style="left:141.9px;top:196.7px;width:58.72px;height:1px;background:#c9d8e6"></div>
<div class="a" style="left:24.5px;top:208.0px;width:58.72px;height:1px;background:#d9d3e3"></div>
<div class="a" style="left:141.9px;top:208.0px;width:58.72px;height:1px;background:#c9d8e6"></div>
<div class="a" style="left:24.5px;top:219.3px;width:58.72px;height:1px;background:#d9d3e3"></div>
<div class="a" style="left:141.9px;top:219.3px;width:58.72px;height:1px;background:#c9d8e6"></div>
<div class="a" style="left:24.5px;top:230.6px;width:58.72px;height:1px;background:#d9d3e3"></div>
<div class="a" style="left:141.9px;top:230.6px;width:58.72px;height:1px;background:#c9d8e6"></div>
<div class="a" style="left:24.5px;top:242.0px;width:58.72px;height:1px;background:#d9d3e3"></div>
<div class="a" style="left:141.9px;top:242.0px;width:58.72px;height:1px;background:#c9d8e6"></div>
<div class="a cell" style="left:25.5px;top:140.9px">Name</div>
<div class="a cell" style="left:84.2px;top:130.4px">Average Jan<br>temp (C)</div>
<div class="a cell" style="left:142.9px;top:130.4px">Average July<br>temp (C)</div>
<div class="a cell" style="left:201.7px;top:140.9px">Hottest month</div>
<div class="a cell" style="left:260.4px;top:130.4px">Average Jan<br>rain (mm)</div>
<div class="a cell" style="left:319.1px;top:130.4px">Average July<br>rain (mm)</div>
<div class="a cell" style="left:377.8px;top:119.9px">Av daily<br>hours of sun<br>in Jan</div>
<div class="a cell" style="left:436.5px;top:119.9px">Av daily<br>hours of sun<br>in July</div>
<div class="a cell" style="left:25.5px;top:151.8px">Italy</div>
<div class="a cell num" style="left:83.2px;width:57.2px;top:151.8px">8</div>
<div class="a cell num" style="left:141.9px;width:57.2px;top:151.8px">23</div>
<div class="a cell" style="left:201.7px;top:151.8px">July</div>
<div class="a cell num" style="left:259.4px;width:57.2px;top:151.8px">25</div>
<div class="a cell num" style="left:318.1px;width:57.2px;top:151.8px">7</div>
<div class="a cell num" style="left:376.8px;width:57.2px;top:151.8px">4</div>
<div class="a cell num" style="left:435.5px;width:57.2px;top:151.8px">11</div>
<div class="a cell" style="left:25.5px;top:163.1px">Spain</div>
<div class="a cell num" style="left:83.2px;width:57.2px;top:163.1px">12</div>
<div class="a cell num" style="left:141.9px;width:57.2px;top:163.1px">25</div>
<div class="a cell" style="left:201.7px;top:163.1px">August</div>
<div class="a cell num" style="left:259.4px;width:57.2px;top:163.1px">20</div>
<div class="a cell num" style="left:318.1px;width:57.2px;top:163.1px">4</div>
<div class="a cell num" style="left:376.8px;width:57.2px;top:163.1px">6</div>
<div class="a cell num" style="left:435.5px;width:57.2px;top:163.1px">11</div>
<div class="a cell" style="left:25.5px;top:174.4px">Germany</div>
<div class="a cell num" style="left:83.2px;width:57.2px;top:174.4px">1</div>
<div class="a cell num" style="left:141.9px;width:57.2px;top:174.4px">19</div>
<div class="a cell" style="left:201.7px;top:174.4px">July</div>
<div class="a cell num" style="left:259.4px;width:57.2px;top:174.4px">48</div>
<div class="a cell num" style="left:318.1px;width:57.2px;top:174.4px">66</div>
<div class="a cell num" style="left:376.8px;width:57.2px;top:174.4px">2</div>
<div class="a cell num" style="left:435.5px;width:57.2px;top:174.4px">8</div>
<div class="a cell" style="left:25.5px;top:185.8px">Brazil</div>
<div class="a cell num" style="left:83.2px;width:57.2px;top:185.8px">26</div>
<div class="a cell num" style="left:141.9px;width:57.2px;top:185.8px">21</div>
<div class="a cell" style="left:201.7px;top:185.8px">February</div>
<div class="a cell num" style="left:259.4px;width:57.2px;top:185.8px">114</div>
<div class="a cell num" style="left:318.1px;width:57.2px;top:185.8px">56</div>
<div class="a cell num" style="left:376.8px;width:57.2px;top:185.8px">7</div>
<div class="a cell num" style="left:435.5px;width:57.2px;top:185.8px">6</div>
<div class="a cell" style="left:25.5px;top:197.1px">Greece</div>
<div class="a cell num" style="left:83.2px;width:57.2px;top:197.1px">10</div>
<div class="a cell num" style="left:141.9px;width:57.2px;top:197.1px">29</div>
<div class="a cell" style="left:201.7px;top:197.1px">July</div>
<div class="a cell num" style="left:259.4px;width:57.2px;top:197.1px">57</div>
<div class="a cell num" style="left:318.1px;width:57.2px;top:197.1px">6</div>
<div class="a cell num" style="left:376.8px;width:57.2px;top:197.1px">5</div>
<div class="a cell num" style="left:435.5px;width:57.2px;top:197.1px">12</div>
<div class="a cell" style="left:25.5px;top:208.4px">Mexico</div>
<div class="a cell num" style="left:83.2px;width:57.2px;top:208.4px">13</div>
<div class="a cell num" style="left:141.9px;width:57.2px;top:208.4px">17</div>
<div class="a cell" style="left:201.7px;top:208.4px">June</div>
<div class="a cell num" style="left:259.4px;width:57.2px;top:208.4px">10</div>
<div class="a cell num" style="left:318.1px;width:57.2px;top:208.4px">60</div>
<div class="a cell num" style="left:376.8px;width:57.2px;top:208.4px">8</div>
<div class="a cell num" style="left:435.5px;width:57.2px;top:208.4px">6</div>
<div class="a cell" style="left:25.5px;top:219.7px">Australia</div>
<div class="a cell num" style="left:83.2px;width:57.2px;top:219.7px">23</div>
<div class="a cell num" style="left:141.9px;width:57.2px;top:219.7px">13</div>
<div class="a cell" style="left:201.7px;top:219.7px">February</div>
<div class="a cell num" style="left:259.4px;width:57.2px;top:219.7px">131</div>
<div class="a cell num" style="left:318.1px;width:57.2px;top:219.7px">56</div>
<div class="a cell num" style="left:376.8px;width:57.2px;top:219.7px">9</div>
<div class="a cell num" style="left:435.5px;width:57.2px;top:219.7px">7</div>
<div class="a cell" style="left:25.5px;top:231.0px">France</div>
<div class="a cell num" style="left:83.2px;width:57.2px;top:231.0px">5</div>
<div class="a cell num" style="left:141.9px;width:57.2px;top:231.0px">20</div>
<div class="a cell" style="left:201.7px;top:231.0px">July</div>
<div class="a cell num" style="left:259.4px;width:57.2px;top:231.0px">18</div>
<div class="a cell num" style="left:318.1px;width:57.2px;top:231.0px">22</div>
<div class="a cell num" style="left:376.8px;width:57.2px;top:231.0px">1</div>
<div class="a cell num" style="left:435.5px;width:57.2px;top:231.0px">8</div>
<div class="a cell" style="left:25.5px;top:242.4px">England</div>
<div class="a cell num" style="left:83.2px;width:57.2px;top:242.4px">5</div>
<div class="a cell num" style="left:141.9px;width:57.2px;top:242.4px">19</div>
<div class="a cell" style="left:201.7px;top:242.4px">July</div>
<div class="a cell num" style="left:259.4px;width:57.2px;top:242.4px">52</div>
<div class="a cell num" style="left:318.1px;width:57.2px;top:242.4px">41</div>
<div class="a cell num" style="left:376.8px;width:57.2px;top:242.4px">1</div>
<div class="a cell num" style="left:435.5px;width:57.2px;top:242.4px">6</div>
<div class="a" style="left:23.9px;top:151.3px;width:59.9px;height:103.1px;border:1.2px solid #8764b8"></div>
<div class="a" style="left:81.7px;top:150.4px;width:3px;height:3px;background:#8764b8"></div>
<div class="a" style="left:81.7px;top:252.3px;width:3px;height:3px;background:#8764b8"></div>
<div class="a" style="left:141.3px;top:117.6px;width:59.9px;height:34.9px;border:1.2px solid #cc4450"></div>
<div class="a" style="left:140.4px;top:116.7px;width:3px;height:3px;background:#cc4450"></div>
<div class="a" style="left:199.2px;top:116.7px;width:3px;height:3px;background:#cc4450"></div>
<div class="a" style="left:140.4px;top:150.4px;width:3px;height:3px;background:#cc4450"></div>
<div class="a" style="left:199.2px;top:150.4px;width:3px;height:3px;background:#cc4450"></div>
<div class="a" style="left:141.3px;top:152.3px;width:59.9px;height:102.1px;border:1.2px solid #2b88d8"></div>
<div class="a" style="left:140.4px;top:252.3px;width:3px;height:3px;background:#2b88d8"></div>
<div class="a" style="left:199.2px;top:252.3px;width:3px;height:3px;background:#2b88d8"></div>
<div class="a" style="left:1015px;top:118.3px;width:9px;height:316px;background:#e6e6e6;border-left:1px solid #dcdcdc"></div>
<div class="a" style="left:1015px;top:118.3px;width:9px;height:11.3px;background:#fff;border-left:1px solid #dcdcdc;border-bottom:1px solid #dcdcdc"></div>
<svg class="a" style="left:1016.5px;top:122px" width="7" height="5" viewBox="0 0 7 5"><path d="M0.6 3.6 L3.1 1 L5.6 3.6 Z" fill="#605e5c"/></svg>
<div class="a" style="left:1015px;top:129.6px;width:9px;height:10.9px;background:#fff;border-left:1px solid #dcdcdc;border-bottom:1px solid #dcdcdc"></div>
<div class="a" style="left:1015px;top:424.2px;width:9px;height:10px;background:#fff;border-left:1px solid #dcdcdc;border-top:1px solid #dcdcdc"></div>
<svg class="a" style="left:1016.5px;top:427.5px" width="7" height="5" viewBox="0 0 7 5"><path d="M0.6 1 L3.1 3.6 L5.6 1 Z" fill="#605e5c"/></svg>
<div class="a" style="left:0;top:434.2px;width:1024px;height:11px;background:#f3f2f1"></div>
<div class="a" style="left:24.4px;top:434.2px;width:990.2px;height:10.4px;background:#e6e6e6"></div>
<div class="a" style="left:24.4px;top:434.2px;width:555px;height:10.4px;background:#fff;border:1px solid #dcdcdc;border-top:none"></div>
<div class="a" style="left:24.4px;top:434.2px;width:11.6px;height:10.4px;background:#fff;border:1px solid #dcdcdc;border-top:none"></div>
<svg class="a" style="left:28px;top:436px" width="5" height="7" viewBox="0 0 5 7"><path d="M3.6 0.8 L0.8 3.3 L3.6 5.8 Z" fill="#323130"/></svg>
<div class="a" style="left:1003.8px;top:434.2px;width:10.8px;height:10.4px;background:#fff;border:1px solid #dcdcdc;border-top:none"></div>
<svg class="a" style="left:1007.5px;top:435.8px" width="5" height="7" viewBox="0 0 5 7"><path d="M1 0.8 L3.6 3.3 L1 5.8 Z" fill="#605e5c"/></svg>
<div class="a" style="left:24.4px;top:434px;width:990.6px;height:1px;background:#dadada"></div>
<div class="a" style="left:0;top:444.6px;width:1024px;height:21.4px;background:#f3f3f3;border-bottom:1px solid #e6e5e4"></div>
<svg class="a" style="left:8px;top:451px" width="6" height="9" viewBox="0 0 6 9"><path d="M4.6 0.6 L1.2 4 L4.6 7.4" fill="none" stroke="#b3b0ad" stroke-width="0.8"/></svg>
<svg class="a" style="left:29.5px;top:451px" width="6" height="9" viewBox="0 0 6 9"><path d="M1.2 0.6 L4.6 4 L1.2 7.4" fill="none" stroke="#b3b0ad" stroke-width="0.8"/></svg>
<svg class="a" style="left:49px;top:451px" width="10" height="8" viewBox="0 0 10 8"><path d="M0.5 1.2 H9 M0.5 4.1 H9 M0.5 7 H9" stroke="#424242" stroke-width="0.9"/></svg>
<div class="a" style="left:70.61px;top:448.47px;font-size:11px;line-height:normal;color:#3b3a39;transform:scaleX(0.887);transform-origin:0 0;-webkit-text-stroke:0.15px #3b3a39;">export.csv</div>
<div class="a" style="left:70px;top:463.9px;width:46px;height:1.8px;background:#2d7d4f"></div>
<svg class="a" style="left:127px;top:451px" width="10" height="9" viewBox="0 0 10 9"><path d="M4.9 0.3 V8 M0.8 4.1 H9.1" stroke="#424242" stroke-width="0.9"/></svg>
<div class="a" style="left:0;top:466px;width:1024px;height:13px;background:#fff"></div>
<div class="a" style="left:8.19px;top:469.81px;font-size:10.2px;line-height:normal;color:#7d7b79;transform:scaleX(0.807);transform-origin:0 0;">Calculation Mode: Automatic</div>
<div class="a" style="left:123.40px;top:469.81px;font-size:10.2px;line-height:normal;color:#7d7b79;transform:scaleX(0.788);transform-origin:0 0;">Workbook Statistics</div>
<div class="a" style="left:638.91px;top:469.81px;font-size:10.2px;line-height:normal;color:#7d7b79;transform:scaleX(0.764);transform-origin:0 0;">Average: 20.66666667</div>
<div class="a" style="left:725.89px;top:469.81px;font-size:10.2px;line-height:normal;color:#7d7b79;transform:scaleX(0.796);transform-origin:0 0;">Count: 20</div>
<div class="a" style="left:769.40px;top:469.81px;font-size:10.2px;line-height:normal;color:#7d7b79;transform:scaleX(0.776);transform-origin:0 0;">Sum: 186</div>
<div class="a" style="left:843.90px;top:469.81px;font-size:10.2px;line-height:normal;color:#7d7b79;transform:scaleX(0.790);transform-origin:0 0;">Give Feedback to Microsoft</div>
<div class="a" style="left:982.62px;top:469.81px;font-size:10.2px;line-height:normal;color:#7d7b79;transform:scaleX(0.742);transform-origin:0 0;">100%</div>
<svg class="a" style="left:811.5px;top:474px" width="6" height="4" viewBox="0 0 6 4"><path d="M0.4 0.6 L2.2 2.6 L4 0.6 Z" fill="#505050" stroke="#505050" stroke-width="0.5" stroke-linejoin="round"/></svg>
<div class="a" style="left:969.8px;top:474.8px;width:7px;height:0.9px;background:#424242"></div>
<svg class="a" style="left:1006.5px;top:470.5px" width="9" height="9" viewBox="0 0 9 9"><path d="M4.5 0.3 V8.5 M0.5 4.4 H8.6" stroke="#424242" stroke-width="0.9"/></svg>
<div class="a" style="left:543.4px;top:177.5px;width:321.6px;height:193.1px;background:#fff"></div>
<svg class="a" style="left:0;top:0" width="1024" height="479" viewBox="0 0 1024 479"><line x1="565.7" y1="310.30" x2="855" y2="310.30" stroke="#d9d9d9" stroke-width="1"/><line x1="565.7" y1="296.01" x2="855" y2="296.01" stroke="#d9d9d9" stroke-width="1"/><line x1="565.7" y1="281.73" x2="855" y2="281.73" stroke="#d9d9d9" stroke-width="1"/><line x1="565.7" y1="267.44" x2="855" y2="267.44" stroke="#d9d9d9" stroke-width="1"/><line x1="565.7" y1="253.16" x2="855" y2="253.16" stroke="#d9d9d9" stroke-width="1"/><line x1="565.7" y1="238.87" x2="855" y2="238.87" stroke="#d9d9d9" stroke-width="1"/><line x1="565.7" y1="224.58" x2="855" y2="224.58" stroke="#d9d9d9" stroke-width="1"/><line x1="565.7" y1="210.30" x2="855" y2="210.30" stroke="#d9d9d9" stroke-width="1"/><rect x="576.60" y="244.58" width="10.2" height="65.72" fill="#4285f4"/><rect x="608.77" y="238.87" width="10.2" height="71.43" fill="#4285f4"/><rect x="640.94" y="256.01" width="10.2" height="54.29" fill="#4285f4"/><rect x="673.11" y="250.30" width="10.2" height="60.00" fill="#4285f4"/><rect x="705.28" y="227.44" width="10.2" height="82.86" fill="#4285f4"/><rect x="737.45" y="261.73" width="10.2" height="48.57" fill="#4285f4"/><rect x="769.62" y="273.16" width="10.2" height="37.14" fill="#4285f4"/><rect x="801.79" y="253.16" width="10.2" height="57.14" fill="#4285f4"/><rect x="833.96" y="256.01" width="10.2" height="54.29" fill="#4285f4"/><line x1="543.40" y1="177.50" x2="865.00" y2="177.50" stroke="#6aa583" stroke-width="1"/><line x1="543.40" y1="177.50" x2="543.40" y2="370.60" stroke="#6aa583" stroke-width="1"/><line x1="865.00" y1="177.50" x2="865.00" y2="370.60" stroke="#8fc0a3" stroke-width="1"/><line x1="543.40" y1="370.60" x2="865.00" y2="370.60" stroke="#8fc0a3" stroke-width="1"/><circle cx="543.45" cy="177.45" r="2.4" fill="#fff" stroke="#7a7a7a" stroke-width="1"/><circle cx="864.10" cy="177.45" r="2.4" fill="#fff" stroke="#7a7a7a" stroke-width="1"/><circle cx="543.45" cy="369.60" r="2.4" fill="#fff" stroke="#7a7a7a" stroke-width="1"/><circle cx="864.10" cy="369.60" r="2.4" fill="#fff" stroke="#7a7a7a" stroke-width="1"/><rect x="701.48" y="175.15" width="4.6" height="4.6" rx="1" fill="#fff" stroke="#7a7a7a" stroke-width="1"/><rect x="701.48" y="367.30" width="4.6" height="4.6" rx="1" fill="#fff" stroke="#7a7a7a" stroke-width="1"/><rect x="541.15" y="271.22" width="4.6" height="4.6" rx="1" fill="#fff" stroke="#7a7a7a" stroke-width="1"/><rect x="861.80" y="271.22" width="4.6" height="4.6" rx="1" fill="#fff" stroke="#7a7a7a" stroke-width="1"/><rect x="663.2" y="355.7" width="4" height="4" fill="#4285f4"/></svg>
<div class="a" style="left:642px;top:185px;font-size:12.7px;color:#595959">Average July temp (C)</div>
<div class="a" style="left:540px;width:19px;text-align:right;top:305.5px;font-size:8px;color:#666">0</div>
<div class="a" style="left:540px;width:19px;text-align:right;top:291.2px;font-size:8px;color:#666">5</div>
<div class="a" style="left:540px;width:19px;text-align:right;top:276.9px;font-size:8px;color:#666">10</div>
<div class="a" style="left:540px;width:19px;text-align:right;top:262.6px;font-size:8px;color:#666">15</div>
<div class="a" style="left:540px;width:19px;text-align:right;top:248.4px;font-size:8px;color:#666">20</div>
<div class="a" style="left:540px;width:19px;text-align:right;top:234.1px;font-size:8px;color:#666">25</div>
<div class="a" style="left:540px;width:19px;text-align:right;top:219.8px;font-size:8px;color:#666">30</div>
<div class="a" style="left:540px;width:19px;text-align:right;top:205.5px;font-size:8px;color:#666">35</div>
<div class="a" style="right:441.7px;top:314px;font-size:8px;color:#666;transform-origin:100% 50%;transform:rotate(-45deg)">Italy</div>
<div class="a" style="right:409.5px;top:314px;font-size:8px;color:#666;transform-origin:100% 50%;transform:rotate(-45deg)">Spain</div>
<div class="a" style="right:377.4px;top:314px;font-size:8px;color:#666;transform-origin:100% 50%;transform:rotate(-45deg)">Germany</div>
<div class="a" style="right:345.2px;top:314px;font-size:8px;color:#666;transform-origin:100% 50%;transform:rotate(-45deg)">Brazil</div>
<div class="a" style="right:313.0px;top:314px;font-size:8px;color:#666;transform-origin:100% 50%;transform:rotate(-45deg)">Greece</div>
<div class="a" style="right:280.8px;top:314px;font-size:8px;color:#666;transform-origin:100% 50%;transform:rotate(-45deg)">Mexico</div>
<div class="a" style="right:248.7px;top:314px;font-size:8px;color:#666;transform-origin:100% 50%;transform:rotate(-45deg)">Australia</div>
<div class="a" style="right:216.5px;top:314px;font-size:8px;color:#666;transform-origin:100% 50%;transform:rotate(-45deg)">France</div>
<div class="a" style="right:184.3px;top:314px;font-size:8px;color:#666;transform-origin:100% 50%;transform:rotate(-45deg)">England</div>
<div class="a" style="left:669px;top:352.5px;font-size:8px;color:#666">Average July temp (C)</div></body></html>
